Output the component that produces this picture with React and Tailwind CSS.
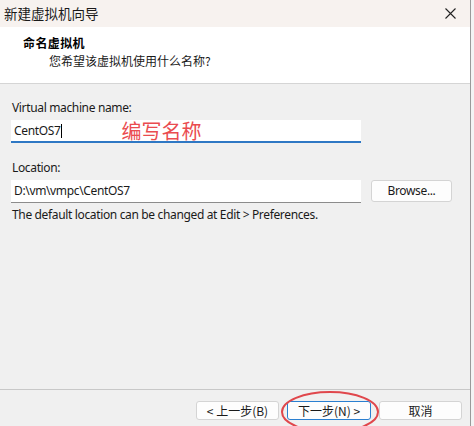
import React from 'react';

const cjk = { fontFamily: '"Noto Sans CJK SC", "Noto Sans", sans-serif' };
const ui = { fontFamily: '"Noto Sans", "Noto Sans CJK SC", sans-serif' };

function WinButton({ children, primary, className = '' }) {
  return (
    <button
      className={`h-[19px] rounded-[3px] bg-[#fdfdfd] text-[12px] leading-none text-[#1a1a1a] ${primary ? 'border border-[#2a7fd0]' : 'border border-[#d4d4d4]'} ${className}`}
      style={cjk}
    >
      {children}
    </button>
  );
}

export default function App() {
  return (
    <div className="w-[474px] h-[426px] bg-[#f4f4f4] flex overflow-hidden">
      <div className="w-[471px] h-full flex flex-col bg-[#f0f0f0] border-r border-[#9a9a9a] relative">
        {/* 标题栏 */}
        <div className="h-[27px] bg-[#f7f2ef] flex items-center justify-between pl-[4px] pr-[14px] shrink-0">
          <span className="text-[13.5px] text-[#1a1a1a]" style={cjk}>新建虚拟机向导</span>
          <svg width="11" height="11" viewBox="0 0 11 11">
            <path d="M0.5 0.5 L10.5 10.5 M10.5 0.5 L0.5 10.5" stroke="#222" strokeWidth="1.1" fill="none" />
          </svg>
        </div>

        {/* 页头 */}
        <div className="h-[57px] bg-white border-b border-[#d5d5d5] shrink-0 pt-[7px]">
          <div className="pl-[23px] text-[12px] font-bold leading-[18px] tracking-[0.4px] text-black" style={cjk}>命名虚拟机</div>
          <div className="pl-[49px] text-[12px] leading-[18px] text-[#1a1a1a]" style={cjk}>您希望该虚拟机使用什么名称?</div>
        </div>

        {/* 内容 */}
        <div className="flex-1 px-[11px] pt-[16px] text-[12px] tracking-[-0.35px]" style={ui}>
          <div className="leading-[16px] text-[#1a1a1a] pl-[1px]">Virtual machine name:</div>
          <div className="mt-[4px] w-[350px] h-[23px] bg-white border-b-2 border-[#2f78c4] flex items-center pl-[3px] text-[#1a1a1a]">
            <span>CentOS7</span>
            <span className="w-px h-[14px] bg-black ml-[1px]" />
            <span className="ml-[59px] text-[20px] leading-none tracking-normal text-[#ea4c50]" style={cjk}>编写名称</span>
          </div>

          <div className="mt-[17px] leading-[16px] text-[#1a1a1a] pl-[1px]">Location:</div>
          <div className="mt-[4px] flex items-start gap-[10px]">
            <div className="w-[350px] h-[23px] bg-white border-b border-[#8c8c8c] flex items-center pl-[3px] text-[#1a1a1a]">
              D:\vm\vmpc\CentOS7
            </div>
            <button className="w-[81px] h-[22px] rounded-[3px] bg-[#fdfdfd] border border-[#d4d4d4] text-[12px] text-[#1a1a1a]" style={ui}>
              Browse...
            </button>
          </div>
          <div className="mt-[4px] leading-[16px] text-[#1a1a1a] pl-[1px]">
            The default location can be changed at Edit &gt; Preferences.
          </div>
        </div>

        {/* 底部按钮 */}
        <div className="h-[37px] border-t border-[#c8c8c8] shrink-0 flex items-start justify-end pt-[11px] pr-[8px]">
          <WinButton className="w-[83px]">&lt; 上一步(B)</WinButton>
          <WinButton primary className="w-[84px] ml-[8px]">下一步(N) &gt;</WinButton>
          <WinButton className="w-[83px] ml-[8px]">取消</WinButton>
        </div>

        {/* 红色圈注 */}
        <svg className="absolute left-[280px] top-[390px] pointer-events-none" width="102" height="44" viewBox="0 0 102 44">
          <ellipse cx="50" cy="22" rx="48" ry="20" fill="none" stroke="#e0474c" strokeWidth="2" />
        </svg>
      </div>
    </div>
  );
}
